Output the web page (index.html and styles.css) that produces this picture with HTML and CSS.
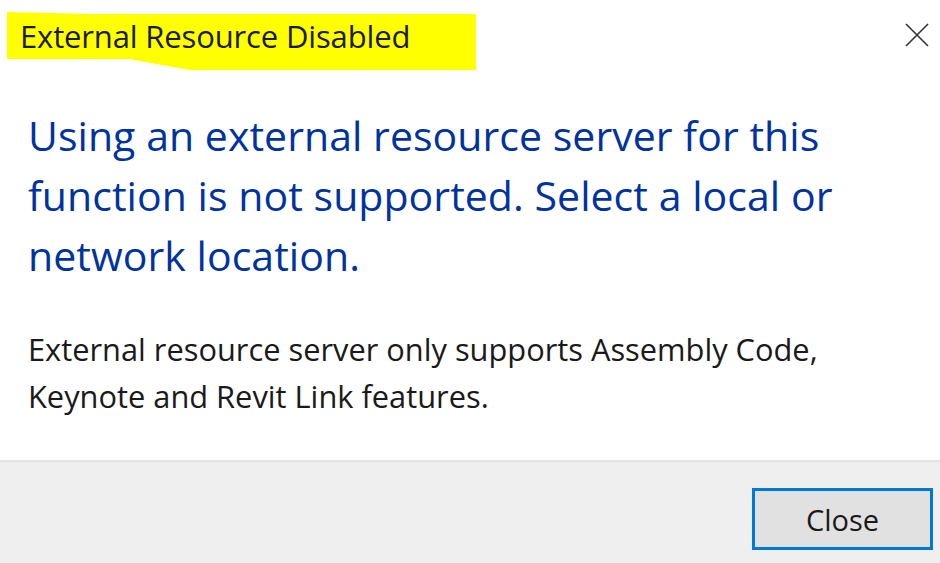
FILE: index.html
```html
<!DOCTYPE html>
<html>
<head>
<meta charset="utf-8">
<link rel="stylesheet" href="styles.css">
</head>
<body>
<div class="dialog">
  <header class="titlebar">
    <span class="title">External Resource Disabled</span>
    <span class="close-x" aria-label="Close">
      <svg width="26" height="26" viewBox="0 0 26 26"><path d="M2 2 L24 24 M24 2 L2 24" stroke="#333" stroke-width="1.6" fill="none"/></svg>
    </span>
  </header>
  <main class="content">
    <h1 class="instruction">Using an external resource server for this<br>function is not supported. Select a local or<br>network location.</h1>
    <p class="detail">External resource server only supports Assembly Code,<br>Keynote and Revit Link features.</p>
  </main>
  <footer class="footer">
    <button class="btn">Close</button>
  </footer>
</div>
</body>
</html>
```
FILE: styles.css
```css
html, body { margin: 0; padding: 0; background: #fff; }
body { font-family: "Open Sans", "Noto Sans", sans-serif; }
.dialog { height: 563px; display: flex; flex-direction: column; }
.titlebar { display: flex; justify-content: space-between; align-items: flex-start; padding: 12px 8px 0 7px; height: 70px; box-sizing: border-box; }
.title {
  background: #ffff00;
  font-size: 31px;
  color: #1a1a1a;
  padding: 6px 66px 16px 13px;
  line-height: 36px;
  clip-path: polygon(0 0, 18% 2px, 100% 2px, 100% 100%, 39% 100%, 26% calc(100% - 11px), 0 calc(100% - 11px));
  letter-spacing: -0.15px;
}
.close-x { margin-top: 10px; margin-right: 2px; display: flex; }
.content { flex: 1; padding: 35px 0 0 28px; }
.instruction { margin: 0; font-weight: 400; font-size: 41px; line-height: 60px; color: #0033a0; letter-spacing: 0.05px; }
.detail { margin: 41px 0 0; font-size: 30.8px; line-height: 47px; color: #1a1a1a; }
.footer { height: 103px; box-sizing: border-box; background: #efefef; border-top: 2px solid #e2e2e2; display: flex; justify-content: flex-end; padding: 26px 7px 0 0; }
.btn { width: 181px; height: 62px; box-sizing: border-box; border: 3px solid #0078d7; background: #e1e1e1; font-family: inherit; font-size: 29px; color: #1a1a1a; padding: 0; }
```
